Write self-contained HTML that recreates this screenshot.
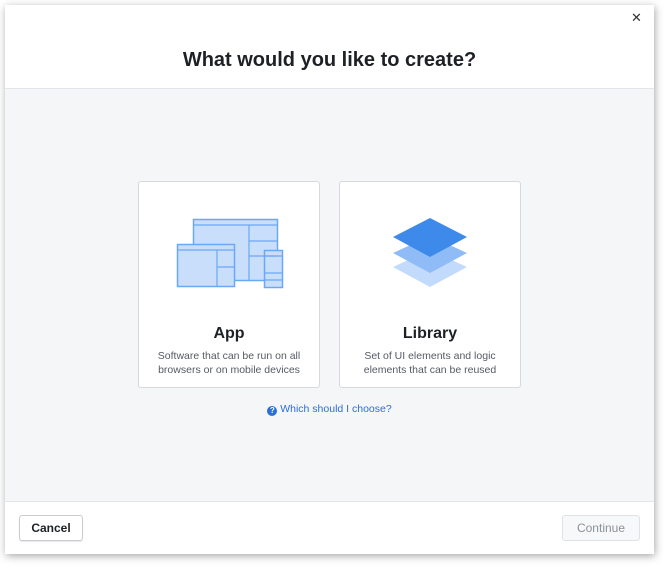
<!DOCTYPE html>
<html><head><meta charset="utf-8"><style>
*{box-sizing:border-box;margin:0;padding:0}
body{width:669px;height:570px;background:#fff;font-family:"Liberation Sans",sans-serif;position:relative;overflow:hidden}
.dlg{position:absolute;left:5px;top:5px;width:649px;height:549px;background:#fff;box-shadow:1px 2px 8px rgba(0,0,0,.35)}
.hdr{position:absolute;left:0;top:0;width:649px;height:84px;border-bottom:1px solid #e3e5e8;background:#fff}
.hdr h1{position:absolute;left:0;right:0;top:44px;text-align:center;font-size:20px;font-weight:bold;color:#1d2126}
.x{position:absolute;left:626px;top:5px;font-size:13px;color:#333}
.body{position:absolute;left:0;top:84px;width:649px;height:412px;background:#f5f6f8}
.card{position:absolute;top:92px;width:182px;height:207px;background:#fff;border:1px solid #d6d9dd;border-radius:3px;text-align:center}
.card h2{position:absolute;top:143px;left:0;right:0;font-size:16px;font-weight:bold;color:#1d2126}
.card p{position:absolute;top:167px;left:0;right:0;font-size:10.5px;line-height:14px;color:#555b63}
.help{position:absolute;top:314px;left:0;right:0;text-align:center;font-size:10.5px;color:#2a6fd6}
.help b{display:inline-block;width:10px;height:10px;border-radius:50%;background:#2a6fd6;color:#fff;font-size:8px;line-height:10px;vertical-align:-1px}
.ftr{position:absolute;left:0;top:496px;width:649px;height:53px;border-top:1px solid #e3e5e8;background:#fff}
.btn{position:absolute;top:13px;height:26px;border:1px solid #c9cdd2;border-radius:3px;font-size:12px;font-weight:bold;line-height:24px;text-align:center}
</style></head><body>
<div class="dlg">
<div class="hdr"><h1>What would you like to create?</h1><div class="x">✕</div></div>
<div class="body">
<div class="card" style="left:133px">
<svg style="position:absolute;left:36px;top:35px" width="110" height="72" viewBox="0 0 110 72">
<g fill="#c9defb" stroke="#6aa8f5" stroke-width="1.5">
<rect x="18.5" y="2.5" width="84" height="61"/>
<rect x="2.5" y="27.5" width="57" height="42"/>
<rect x="89.5" y="33.5" width="18" height="37"/>
</g>
<g stroke="#6aa8f5" stroke-width="1.2" fill="none">
<path d="M18 8H103M74 8V63M74 24H103M74 39H103"/>
<path d="M2 33H60M42 33V70M42 50H60"/>
<path d="M89 39H108M89 56H108M89 63H108"/>
</g></svg>
<h2>App</h2><p>Software that can be run on all<br>browsers or on mobile devices</p></div>
<div class="card" style="left:334px">
<svg style="position:absolute;left:52px;top:35px" width="76" height="72" viewBox="0 0 76 72">
<polygon points="38,33 75,50 38,70 1,50" fill="#c2dbfc"/>
<polygon points="38,19 75,36 38,56 1,36" fill="#8fbcf6"/>
<polygon points="38,1 75,20 38,40 1,20" fill="#3d8aeb"/>
</svg>
<h2>Library</h2><p>Set of UI elements and logic<br>elements that can be reused</p></div>
<div class="help"><b>?</b> Which should I choose?</div>
</div>
<div class="ftr">
<div class="btn" style="left:14px;width:64px;color:#1d2126;box-shadow:0 1px 1px rgba(0,0,0,.1)">Cancel</div>
<div class="btn" style="left:557px;width:78px;color:#8a9098;background:#f7f8f9;border-color:#e0e3e6;font-weight:normal">Continue</div>
</div>
</div>
</body></html>
